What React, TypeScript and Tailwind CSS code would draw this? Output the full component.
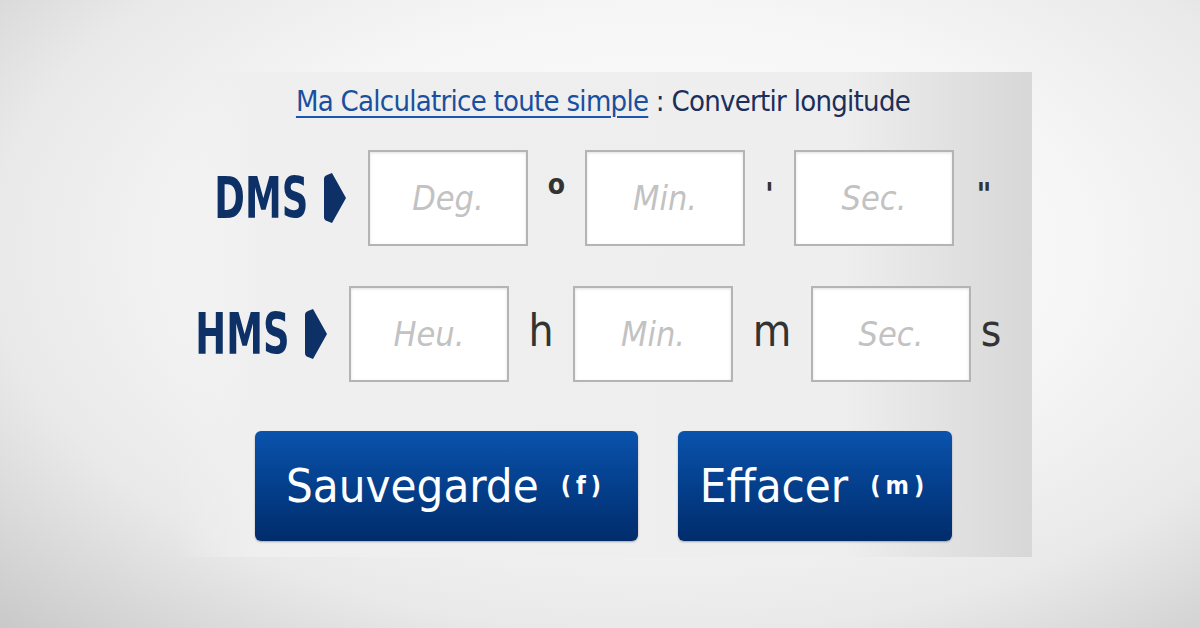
import React from 'react';

const FONT = '"Liberation Sans Narrow", "DejaVu Sans Condensed", "DejaVu Sans", sans-serif';

function Arrow() {
  return (
    <svg width="24" height="50" viewBox="0 0 24 50" className="shrink-0">
      <path d="M1 6 Q1 3 4 2 L9 0 L23 25 L9 50 L4 48 Q1 47 1 44 Z" fill="#0d3167" />
    </svg>
  );
}

function Label({ text }: { text: string }) {
  return (
    <span className="w-[91px] flex justify-center shrink-0">
      <span className="inline-block scale-x-[0.72] text-[57px] leading-none font-bold text-[#0d3167]">{text}</span>
    </span>
  );
}

function Field({ placeholder }: { placeholder: string }) {
  return (
    <input
      placeholder={placeholder}
      className="w-[160px] h-[96px] shrink-0 bg-white border-2 border-[#b4b4b4] shadow-[inset_0_1px_3px_rgba(0,0,0,0.12)] text-center text-[34px] italic text-[#555] placeholder:text-[#c2c2c2] outline-none"
      style={{ fontFamily: FONT }}
    />
  );
}

export default function App() {
  return (
    <div
      className="w-[1200px] h-[628px] overflow-hidden flex items-start bg-[radial-gradient(ellipse_at_55%_40%,#ffffff_0%,#f6f6f6_45%,#e9e9e9_72%,#c9c9c9_100%)]"
      style={{ fontFamily: FONT }}
    >
      <div className="ml-[174px] mt-[72px] w-[858px] h-[485px] flex flex-col items-center bg-[linear-gradient(to_right,rgba(239,239,239,0)_0%,#efefef_10%,#eeeeee_78%,#d7d7d7_100%)]">
        {/* Title */}
        <div className="mt-[12px] text-[29px] leading-[34px] tracking-tight text-[#1c2f5a]">
          <a href="#" className="text-[#1a4f9f] underline decoration-2 underline-offset-[5px] decoration-[#1a56b0]">
            Ma Calculatrice toute simple
          </a>{' '}
          : Convertir longitude
        </div>

        {/* DMS row */}
        <div className="self-start ml-[42px] mt-[32px] flex items-center">
          <Label text="DMS" />
          <span className="ml-[16px]"><Arrow /></span>
          <div className="ml-[21px] flex items-center">
            <Field placeholder="Deg." />
            <span className="w-[57px] self-start mt-[14px] text-center text-[28px] font-bold text-[#333]">o</span>
            <Field placeholder="Min." />
            <span className="w-[49px] self-start mt-[20px] text-center text-[32px] font-bold text-[#333]">'</span>
            <Field placeholder="Sec." />
            <span className="w-[60px] self-start mt-[20px] text-center text-[32px] font-bold text-[#333]">"</span>
          </div>
        </div>

        {/* HMS row */}
        <div className="self-start ml-[23px] mt-[40px] flex items-center">
          <Label text="HMS" />
          <span className="ml-[16px]"><Arrow /></span>
          <div className="ml-[21px] flex items-center">
            <Field placeholder="Heu." />
            <span className="w-[64px] mb-[6px] text-center text-[44px] text-[#333]">h</span>
            <Field placeholder="Min." />
            <span className="w-[78px] mb-[6px] text-center text-[44px] text-[#333]">m</span>
            <Field placeholder="Sec." />
            <span className="w-[40px] mb-[6px] text-center text-[44px] text-[#333]">s</span>
          </div>
        </div>

        {/* Buttons */}
        <div className="mt-[49px] flex gap-[40px]">
          <button className="w-[383px] h-[110px] rounded-[6px] bg-gradient-to-b from-[#0a53ad] to-[#012c6c] text-white shadow-[0_1px_2px_rgba(0,0,0,0.3)] flex items-center justify-center">
            <span className="text-[47px]">Sauvegarde</span>
            <span className="ml-[22px] text-[25px] font-bold tracking-[5px]">(f)</span>
          </button>
          <button className="w-[274px] h-[110px] rounded-[6px] bg-gradient-to-b from-[#0a53ad] to-[#012c6c] text-white shadow-[0_1px_2px_rgba(0,0,0,0.3)] flex items-center justify-center">
            <span className="text-[47px]">Effacer</span>
            <span className="ml-[22px] text-[25px] font-bold tracking-[5px]">(m)</span>
          </button>
        </div>
      </div>
    </div>
  );
}
